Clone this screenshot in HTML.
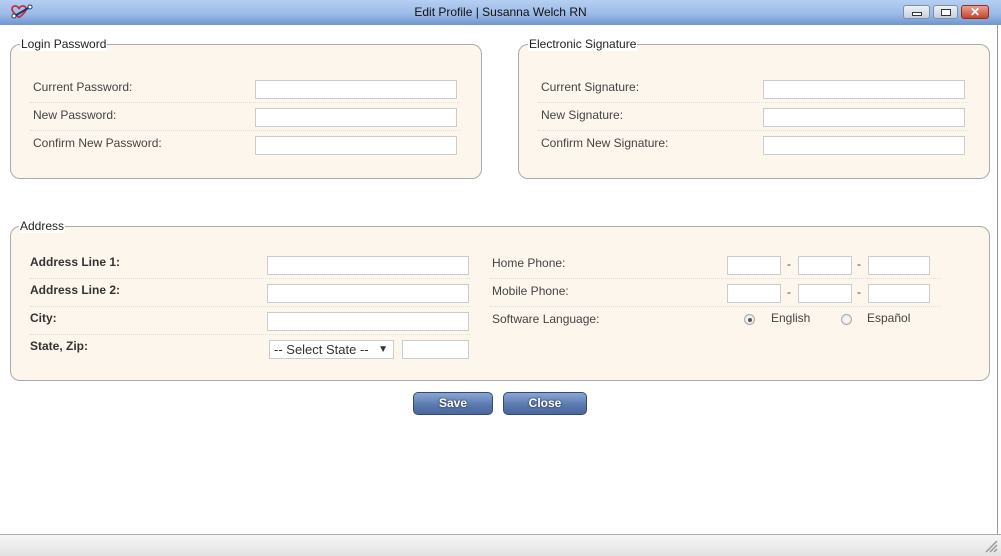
<!DOCTYPE html>
<html><head><style>
*{box-sizing:border-box;margin:0;padding:0}
body{width:1001px;height:556px;background:#fff;font-family:"Liberation Sans",Arial,sans-serif;font-size:12px;color:#333;position:relative;overflow:hidden}
.a{position:absolute}
.tb{left:0;top:0;width:1001px;height:25px;background:linear-gradient(#b5cff2,#9dbbe8 55%,#6f95cf);}
.tt{left:0;width:1001px;top:5px;text-align:center;color:#111;font-size:12px}
.fs{border:1px solid #aaa;border-radius:10px;background:#fdf6ec}
.lg{background:#fff;padding:0 1px;font-size:12px;color:#222;line-height:14px}
.in{border:1px solid #ccc;background:#fff;height:19px}
.lb{font-size:12px;color:#444}
.b{font-weight:bold;color:#333}
.sep{border-top:1px dotted #ddd;height:0}
.btn{border:1px solid #2f4c78;border-radius:5px;background:linear-gradient(#8aa6d4,#5877ad 60%,#4b679c);color:#fff;font-weight:bold;text-align:center;line-height:20px;height:23px;text-shadow:0 0 2px #223;font-size:12px}
.wb{top:5px;height:14px;border:1px solid #7d8ea8;border-radius:3px;background:linear-gradient(#eef2f8,#c5cfdd)}
.rd{width:11px;height:11px;border-radius:50%;border:1px solid #aaa;background:radial-gradient(#fff,#ddd)}
</style></head><body>
<div class="a tb"></div>
<div class="a tt">Edit Profile | Susanna Welch RN</div>
<svg class="a" style="left:9px;top:3px" width="24" height="18" viewBox="0 0 24 18"><path d="M3 6c0-4 6-4 7 0c1-4 7-4 7 0c0 4-7 8-7 9c0-1-7-5-7-9z" fill="none" stroke="#c0303a" stroke-width="1.8"/><path d="M4 14L21 4" stroke="#223366" stroke-width="2"/><circle cx="21" cy="4" r="2" fill="#fff" stroke="#223366"/><circle cx="5" cy="13" r="2" fill="#fff" stroke="#223366"/></svg>
<div class="a wb" style="left:903px;width:27px"><div class="a" style="left:8px;top:6px;width:10px;height:4px;border:1px solid #334;background:#fff"></div></div>
<div class="a wb" style="left:933px;width:25px"><div class="a" style="left:7px;top:3px;width:10px;height:7px;border:1px solid #334;background:#fff"></div></div>
<div class="a wb" style="left:961px;width:28px;background:linear-gradient(#e8a090,#c8452a);border-color:#8a3020;color:#fff;font-weight:bold;text-align:center;line-height:12px;font-size:12px">✕</div>

<div class="a fs" style="left:10px;top:44px;width:472px;height:135px"></div>
<div class="a lg" style="left:20px;top:37px;background:#fff">Login Password</div>
<div class="a fs" style="left:518px;top:44px;width:472px;height:135px"></div>
<div class="a lg" style="left:528px;top:37px">Electronic Signature</div>

<div class="a lb" style="left:33px;top:80px">Current Password:</div>
<div class="a lb" style="left:33px;top:108px">New Password:</div>
<div class="a lb" style="left:33px;top:136px">Confirm New Password:</div>
<div class="a sep" style="left:30px;top:102px;width:430px"></div>
<div class="a sep" style="left:30px;top:130px;width:430px"></div>
<div class="a in" style="left:255px;top:80px;width:202px"></div>
<div class="a in" style="left:255px;top:108px;width:202px"></div>
<div class="a in" style="left:255px;top:136px;width:202px"></div>

<div class="a lb" style="left:541px;top:80px">Current Signature:</div>
<div class="a lb" style="left:541px;top:108px">New Signature:</div>
<div class="a lb" style="left:541px;top:136px">Confirm New Signature:</div>
<div class="a sep" style="left:538px;top:102px;width:430px"></div>
<div class="a sep" style="left:538px;top:130px;width:430px"></div>
<div class="a in" style="left:763px;top:80px;width:202px"></div>
<div class="a in" style="left:763px;top:108px;width:202px"></div>
<div class="a in" style="left:763px;top:136px;width:202px"></div>

<div class="a fs" style="left:10px;top:226px;width:980px;height:155px"></div>
<div class="a lg" style="left:19px;top:219px">Address</div>
<div class="a lb b" style="left:30px;top:255px">Address Line 1:</div>
<div class="a lb b" style="left:30px;top:283px">Address Line 2:</div>
<div class="a lb b" style="left:30px;top:311px">City:</div>
<div class="a lb b" style="left:30px;top:339px">State, Zip:</div>
<div class="a sep" style="left:30px;top:278px;width:440px"></div>
<div class="a sep" style="left:30px;top:306px;width:440px"></div>
<div class="a sep" style="left:30px;top:334px;width:440px"></div>
<div class="a in" style="left:267px;top:256px;width:202px"></div>
<div class="a in" style="left:267px;top:284px;width:202px"></div>
<div class="a in" style="left:267px;top:312px;width:202px"></div>
<div class="a in" style="left:269px;top:340px;width:125px;font-size:13px;color:#333;padding-left:4px;line-height:17px">-- Select State --<span style="position:absolute;right:5px;font-size:10px">▼</span></div>
<div class="a in" style="left:402px;top:340px;width:67px"></div>

<div class="a lb" style="left:492px;top:256px">Home Phone:</div>
<div class="a lb" style="left:492px;top:284px">Mobile Phone:</div>
<div class="a lb" style="left:492px;top:312px">Software Language:</div>
<div class="a sep" style="left:490px;top:278px;width:450px"></div>
<div class="a sep" style="left:490px;top:306px;width:450px"></div>
<div class="a in" style="left:727px;top:256px;width:54px"></div>
<div class="a lb" style="left:787px;top:257px">-</div>
<div class="a in" style="left:798px;top:256px;width:54px"></div>
<div class="a lb" style="left:857px;top:257px">-</div>
<div class="a in" style="left:868px;top:256px;width:62px"></div>
<div class="a in" style="left:727px;top:284px;width:54px"></div>
<div class="a lb" style="left:787px;top:285px">-</div>
<div class="a in" style="left:798px;top:284px;width:54px"></div>
<div class="a lb" style="left:857px;top:285px">-</div>
<div class="a in" style="left:868px;top:284px;width:62px"></div>
<div class="a rd" style="left:744px;top:314px"><div class="a" style="left:3px;top:3px;width:4px;height:4px;border-radius:50%;background:#555"></div></div>
<div class="a lb" style="left:771px;top:311px">English</div>
<div class="a rd" style="left:841px;top:314px"></div>
<div class="a lb" style="left:867px;top:311px">Español</div>

<div class="a btn" style="left:413px;top:392px;width:80px">Save</div>
<div class="a btn" style="left:503px;top:392px;width:84px">Close</div>

<div class="a" style="left:997px;top:25px;width:4px;height:510px;border-left:1px solid #999;background:#fff"></div>
<div class="a" style="left:0;top:534px;width:1001px;height:22px;border-top:1px solid #aaa;background:linear-gradient(#f6f6f6,#e2e2e2)"></div>
<svg class="a" style="left:984px;top:539px" width="14" height="14"><path d="M2 13L13 2M6 13L13 6M10 13L13 10" stroke="#999" stroke-width="1.5"/></svg>
</body></html>
